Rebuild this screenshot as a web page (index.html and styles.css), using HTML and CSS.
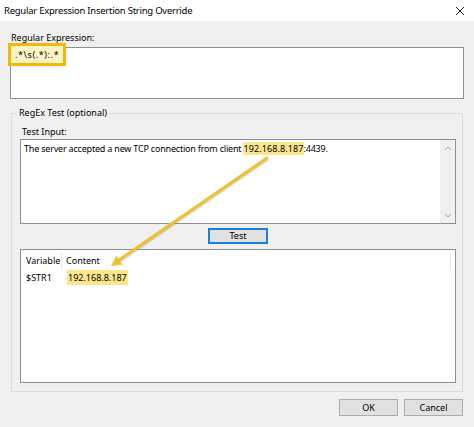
FILE: index.html
```html
<!DOCTYPE html>
<html lang="en">
<head>
<meta charset="utf-8">
<title>Regular Expression Insertion String Override</title>
<link rel="stylesheet" href="styles.css">
</head>
<body>
<div class="window">
  <div class="titlebar">
    <span class="title">Regular Expression Insertion String Override</span>
    <svg class="close" width="10" height="10" viewBox="0 0 10 10"><path d="M1 1L9 9M9 1L1 9" stroke="#222" stroke-width="1" fill="none"/></svg>
  </div>
  <div class="client">
    <div class="label">Regular Expression:</div>
    <div class="textbox regex"></div>
    <fieldset class="group">
      <legend>RegEx Test (optional)</legend>
      <div class="label">Test Input:</div>
      <div class="textbox input">
        <div class="input-text">The server accepted a new TCP connection from client <mark>192.168.8.187</mark>:4439.</div>
        <div class="scrollbar">
          <svg width="8" height="5" viewBox="0 0 8 5"><path d="M1 4L4 1L7 4" stroke="#a0a0a0" fill="none"/></svg>
          <svg width="8" height="5" viewBox="0 0 8 5"><path d="M1 1L4 4L7 1" stroke="#a0a0a0" fill="none"/></svg>
        </div>
      </div>
      <div class="btn-row"><button class="btn default">Test</button></div>
      <div class="listbox">
        <div class="list-row head"><span class="col-var">Variable</span><span class="col-content">Content</span><span class="col-rest"></span></div>
        <div class="list-row"><span class="col-var">$STR1</span><span class="col-content plain"><mark>192.168.8.187</mark></span></div>
      </div>
    </fieldset>
    <div class="footer">
      <button class="btn">OK</button>
      <button class="btn">Cancel</button>
    </div>
  </div>
  <div class="callout">.*\s(.*):.*</div>
  <svg class="arrow" width="474" height="427" viewBox="0 0 474 427">
    <path d="M268 159L120 261" stroke="#8a8a8a" stroke-opacity="0.35" stroke-width="3" fill="none"/>
    <path d="M267 158L119 260" stroke="#f0c12c" stroke-width="3" stroke-linecap="round" fill="none"/>
    <polygon points="111,266 122.5,264.8 116.2,255.7" fill="#f0c12c"/>
  </svg>
</div>
</body>
</html>
```

FILE: styles.css
```css
* { box-sizing: border-box; }
html, body { margin: 0; padding: 0; }
body {
  font-family: "Noto Sans", "Open Sans", sans-serif;
  font-size: 9px;
  color: #000;
  background: #f0f0f0;
}
.window {
  position: relative;
  width: 474px;
  height: 427px;
  background: #f0f0f0;
  overflow: hidden;
}
.titlebar {
  height: 21px;
  background: #fff;
  display: flex;
  align-items: center;
  justify-content: space-between;
  padding: 0 9px 0 4px;
}
.title { font-size: 9.5px; color: #000; line-height: 14px; letter-spacing: -0.25px; }
.close { display: block; }
.client {
  padding: 9px 10px 0 10px;
}
.label {
  height: 16px;
  line-height: 16px;
  padding-left: 1px;
}
.textbox {
  background: #fff;
  border: 1px solid #8f8f8f;
}
.regex {
  margin-top: 1px;
  height: 52px;
}
.group {
  margin: 7px 1px 0 1px;
  padding: 5px 6px 8px 8px;
  border: 1px solid #dcdcdc;
  min-width: 0;
}
.group legend {
  padding: 0 2px;
  margin-left: -3px;
  line-height: 14px;
  height: 14px;
}
.group .label {
  height: 14px;
  line-height: 14px;
  padding-left: 2px;
}
.input {
  height: 85px;
  display: flex;
}
.input-text {
  flex: 1;
  padding: 2px 3px;
  line-height: 14px;
  white-space: nowrap;
  letter-spacing: -0.2px;
}
.input-text mark { letter-spacing: 0.1px; }
mark {
  background: #fbe68c;
  color: #000;
}
.scrollbar {
  width: 15px;
  background: #f0f0f0;
  display: flex;
  flex-direction: column;
  justify-content: space-between;
  align-items: center;
  padding: 6px 0 5px;
}
.scrollbar svg { display: block; }
.btn-row {
  display: flex;
  justify-content: center;
  margin-top: 4px;
}
.btn {
  font: inherit;
  color: #000;
  background: #e1e1e1;
  border: 1px solid #adadad;
  padding: 0;
  margin: 0;
  height: 17px;
  width: 59px;
  line-height: 14px;
}
.btn.default {
  border: 2px solid #1a7fd6;
  height: 16px;
  width: 60px;
  line-height: 12px;
}
.listbox {
  margin-top: 5px;
  height: 134px;
  background: #fff;
  border: 1px solid #8f8f8f;
  padding-top: 3px;
}
.list-row {
  display: flex;
  height: 16px;
  line-height: 16px;
}
.list-row.head { margin-bottom: 1px; }
.col-var {
  width: 41px;
  padding-left: 5px;
  white-space: nowrap;
}
.head .col-var { border-right: 1px solid #e5e5e5; }
.col-content {
  padding-left: 4px;
  white-space: nowrap;
}
.col-content.plain { padding-left: 5px; }
.list-row mark { display: inline-block; line-height: 15px; padding: 0 1px; }
.col-rest {
  flex: 1;
  border-right: 1px solid #e8e8e8;
  margin-right: 4px;
}
.footer {
  display: flex;
  justify-content: flex-end;
  gap: 6px;
  margin-top: 7px;
  padding-right: 1px;
}
.callout {
  position: absolute;
  left: 8px;
  top: 43px;
  width: 58px;
  height: 23px;
  border: 3px solid #f3b80a;
  background: #fff3c8;
  line-height: 17px;
  padding-left: 4px;
  letter-spacing: 0.6px;
  font-size: 9px;
}
.arrow {
  position: absolute;
  left: 0;
  top: 0;
  pointer-events: none;
}
```
